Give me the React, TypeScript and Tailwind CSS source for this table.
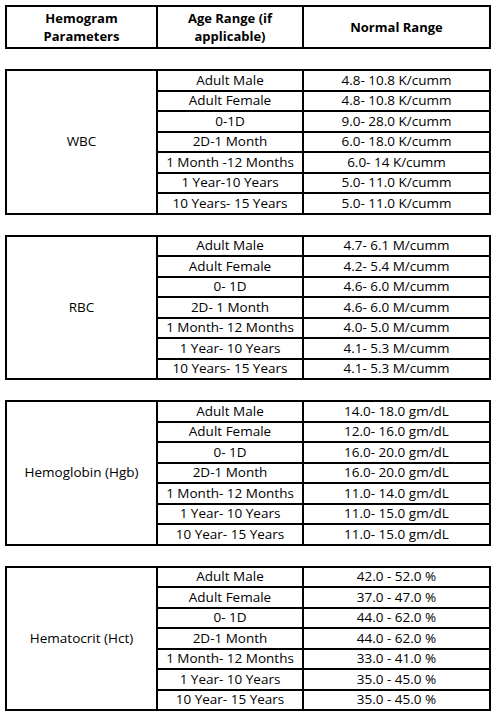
import React from "react";

type Group = {
  name: string;
  rows: [string, string][];
};

const groups: Group[] = [
  {
    name: "WBC",
    rows: [
      ["Adult Male", "4.8- 10.8 K/cumm"],
      ["Adult Female", "4.8- 10.8 K/cumm"],
      ["0-1D", "9.0- 28.0 K/cumm"],
      ["2D-1 Month", "6.0- 18.0 K/cumm"],
      ["1 Month -12 Months", "6.0- 14 K/cumm"],
      ["1 Year-10 Years", "5.0- 11.0 K/cumm"],
      ["10 Years- 15 Years", "5.0- 11.0 K/cumm"],
    ],
  },
  {
    name: "RBC",
    rows: [
      ["Adult Male", "4.7- 6.1 M/cumm"],
      ["Adult Female", "4.2- 5.4 M/cumm"],
      ["0- 1D", "4.6- 6.0 M/cumm"],
      ["2D- 1 Month", "4.6- 6.0 M/cumm"],
      ["1 Month- 12 Months", "4.0- 5.0 M/cumm"],
      ["1 Year- 10 Years", "4.1- 5.3 M/cumm"],
      ["10 Years- 15 Years", "4.1- 5.3 M/cumm"],
    ],
  },
  {
    name: "Hemoglobin (Hgb)",
    rows: [
      ["Adult Male", "14.0- 18.0 gm/dL"],
      ["Adult Female", "12.0- 16.0 gm/dL"],
      ["0- 1D", "16.0- 20.0 gm/dL"],
      ["2D-1 Month", "16.0- 20.0 gm/dL"],
      ["1 Month- 12 Months", "11.0- 14.0 gm/dL"],
      ["1 Year- 10 Years", "11.0- 15.0 gm/dL"],
      ["10 Year- 15 Years", "11.0- 15.0 gm/dL"],
    ],
  },
  {
    name: "Hematocrit (Hct)",
    rows: [
      ["Adult Male", "42.0 - 52.0 %"],
      ["Adult Female", "37.0 - 47.0 %"],
      ["0- 1D", "44.0 - 62.0 %"],
      ["2D-1 Month", "44.0 - 62.0 %"],
      ["1 Month- 12 Months", "33.0 - 41.0 %"],
      ["1 Year- 10 Years", "35.0 - 45.0 %"],
      ["10 Year- 15 Years", "35.0 - 45.0 %"],
    ],
  },
];

const Cols = () => (
  <colgroup>
    <col className="w-[151px]" />
    <col className="w-[146px]" />
    <col className="w-[187px]" />
  </colgroup>
);

const cell = "border-2 border-black text-center align-middle p-0 leading-none";

export default function App() {
  return (
    <div className="bg-white w-[497px] h-[720px] pt-[5px] pl-[5px] text-black font-['Open_Sans',sans-serif] text-[13.5px]">
      <table className="table-fixed border-collapse w-[484px]">
        <Cols />
        <tbody>
          <tr className="h-[42px] font-bold text-[13px]">
            <td className={cell}>
              <div className="leading-[18px]">
                Hemogram
                <br />
                Parameters
              </div>
            </td>
            <td className={cell}>
              <div className="leading-[18px]">
                Age Range (if
                <br />
                applicable)
              </div>
            </td>
            <td className={cell}>Normal Range</td>
          </tr>
        </tbody>
      </table>

      {groups.map((g) => (
        <table key={g.name} className="table-fixed border-collapse w-[484px] mt-[20px]">
          <Cols />
          <tbody>
            {g.rows.map(([age, range], i) => (
              <tr key={age + i} className="h-[20.5px]">
                {i === 0 && (
                  <td rowSpan={g.rows.length} className={cell}>
                    {g.name}
                  </td>
                )}
                <td className={cell}>{age}</td>
                <td className={cell}>{range}</td>
              </tr>
            ))}
          </tbody>
        </table>
      ))}
    </div>
  );
}
